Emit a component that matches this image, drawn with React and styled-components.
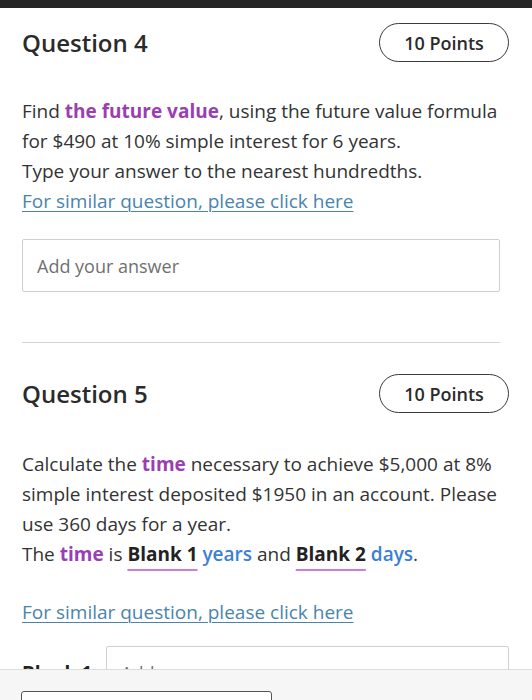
import React from 'react';
import styled, { createGlobalStyle } from 'styled-components';

const GlobalStyle = createGlobalStyle`
   html, body {
      margin: 0;
      padding: 0;
      background: #fff;
   }
   body {
      font-family: "Open Sans", "Noto Sans", sans-serif;
      color: #333;
   }
`;

const Question = ({ number, children }) => (
   <QuestionBlock>
      <Header>
         <Title>Question {number}</Title>
         <Points>10 Points</Points>
      </Header>
      {children}
   </QuestionBlock>
);

const App = () => {
   return (
      <>
         <GlobalStyle />
         <TopBar />
         <Page>
            <Question number={4}>
               <Body>
                  Find <Highlight>the future value</Highlight>, using the future value formula
                  for $490 at 10% simple interest for 6 years.
                  <br />
                  Type your answer to the nearest hundredths.
                  <br />
                  <Link href="#">For similar question, please click here</Link>
               </Body>
               <AnswerInput placeholder="Add your answer" />
            </Question>

            <Divider />

            <Question number={5}>
               <Body spaced>
                  Calculate the <Highlight>time</Highlight> necessary to achieve $5,000 at 8%
                  simple interest deposited $1950 in an account. Please use 360 days for a year.
                  <br />
                  The <Highlight>time</Highlight> is <Blank>Blank 1</Blank> <Unit>years</Unit> and{' '}
                  <Blank>Blank 2</Blank> <Unit>days</Unit>.
               </Body>
               <Body>
                  <Link href="#">For similar question, please click here</Link>
               </Body>
               <BlankRow>
                  <BlankLabel>Blank 1</BlankLabel>
                  <BlankInput placeholder="Add your answer" />
               </BlankRow>
            </Question>
         </Page>
         <Footer>
            <FooterBox />
         </Footer>
      </>
   );
};

/* Styles */
const TopBar = styled.div`
   height: 8px;
   background: #262626;
`;

const Page = styled.main`
   padding: 15px 23px 80px 22px;
`;

const QuestionBlock = styled.section`
   display: flex;
   flex-direction: column;
`;

const Header = styled.div`
   display: flex;
   justify-content: space-between;
   align-items: center;
   margin-bottom: 34px;
`;

const Title = styled.h2`
   margin: 0;
   font-size: 24px;
   font-weight: 600;
   color: #2b2b2b;
`;

const Points = styled.span`
   display: flex;
   align-items: center;
   justify-content: center;
   box-sizing: border-box;
   width: 130px;
   height: 39px;
   border: 1.5px solid #3a3a3a;
   border-radius: 20px;
   font-size: 18px;
   font-weight: 600;
   color: #2b2b2b;
`;

const Body = styled.p`
   margin: ${props => (props.spaced ? '2px 0 28px' : '0')};
   font-size: 19px;
   line-height: 30px;
   color: #333;
`;

const Highlight = styled.strong`
   color: #9b3db3;
   font-weight: 700;
`;

const Unit = styled.strong`
   color: #3b7fd6;
   font-weight: 600;
`;

const Blank = styled.strong`
   color: #222;
   font-weight: 700;
   text-decoration: underline;
   text-decoration-color: #c97fdc;
   text-decoration-thickness: 2px;
   text-underline-offset: 8px;
`;

const Link = styled.a`
   color: #4a84ad;
   text-decoration: underline;
   text-underline-offset: 3px;
   text-decoration-thickness: 1px;
`;

const AnswerInput = styled.input`
   box-sizing: border-box;
   width: 478px;
   height: 53px;
   margin-top: 23px;
   padding: 0 14px;
   border: 1px solid #cfcfcf;
   border-radius: 2px;
   font-family: inherit;
   font-size: 18px;
   color: #333;
   outline: none;
   &::placeholder {
      color: #707070;
   }
`;

const Divider = styled.hr`
   width: 478px;
   margin: 50px 0 31px;
   border: 0;
   border-top: 1px solid #d4d4d4;
`;

const BlankRow = styled.div`
   display: flex;
   align-items: flex-start;
   gap: 14px;
   margin-top: 19px;
`;

const BlankLabel = styled.span`
   margin-top: 14px;
   font-size: 19px;
   font-weight: 700;
   color: #222;
   white-space: nowrap;
`;

const BlankInput = styled(AnswerInput)`
   flex: 1;
   width: auto;
   margin-top: 0;
`;

const Footer = styled.footer`
   position: fixed;
   left: 0;
   right: 0;
   bottom: 0;
   height: 31px;
   box-sizing: border-box;
   padding: 21px 0 0 21px;
   background: #f6f6f6;
   border-top: 1px solid #dcdcdc;
   overflow: hidden;
`;

const FooterBox = styled.div`
   width: 251px;
   height: 40px;
   box-sizing: border-box;
   background: #fff;
   border: 1px solid #555;
   border-radius: 3px;
`;

export default App;
